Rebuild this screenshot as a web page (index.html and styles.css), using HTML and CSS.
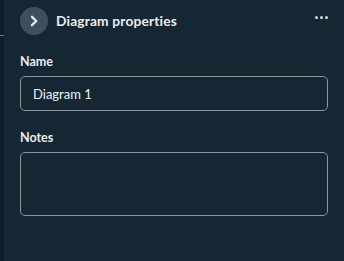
FILE: index.html
```html
<!DOCTYPE html>
<html>
<head>
<meta charset="utf-8">
<link rel="stylesheet" href="styles.css">
</head>
<body>
<div class="page">
  <div class="rail"><div class="rail-tick"></div></div>
  <div class="panel">
    <div class="header">
      <button class="toggle" aria-label="Collapse">
        <svg width="14" height="14" viewBox="0 0 14 14"><path d="M5 2.8 L9.2 7 L5 11.2" fill="none" stroke="#e6eaec" stroke-width="2.4" stroke-linecap="round" stroke-linejoin="round"/></svg>
      </button>
      <div class="title">Diagram properties</div>
      <div class="more"><span></span><span></span><span></span></div>
    </div>
    <div class="field">
      <label class="label">Name</label>
      <div class="input">Diagram 1</div>
    </div>
    <div class="field">
      <label class="label">Notes</label>
      <div class="textarea"></div>
    </div>
  </div>
</div>
</body>
</html>
```
FILE: styles.css
```css
html, body { margin: 0; padding: 0; }
body { background: #132633; font-family: Lato, "Open Sans", sans-serif; color: #e9edef; }
.page { display: flex; width: 344px; height: 261px; }
.rail { width: 4px; background: #0e1e28; flex: none; padding-top: 35px; box-sizing: border-box; }
.rail-tick { height: 1px; background: #6d7a82; }
.panel { flex: 1; background: #142733; padding: 7px 16px 0 16px; box-sizing: border-box; }
.header { display: flex; align-items: center; height: 28px; }
.toggle { width: 28px; height: 28px; border-radius: 50%; background: #3e505b; border: none; padding: 0; display: flex; align-items: center; justify-content: center; flex: none; }
.title { margin-left: 8px; font-weight: 700; font-size: 13.8px; letter-spacing: 0.15px; flex: 1; margin-top: -1px; }
.more { display: flex; gap: 2px; margin-top: -8px; }
.more span { width: 3px; height: 3px; border-radius: 50%; background: #d5dadd; }
.field { margin-top: 19px; }
.label { display: block; font-weight: 700; font-size: 12.5px; line-height: 16px; margin-bottom: 6px; }
.input { height: 35px; border: 1px solid #8b969d; border-radius: 5px; box-sizing: border-box; padding-left: 12px; display: flex; align-items: center; font-size: 13px; color: #eef1f2; }
.textarea { height: 64px; border: 1px solid #8b969d; border-radius: 5px; box-sizing: border-box; }
```
